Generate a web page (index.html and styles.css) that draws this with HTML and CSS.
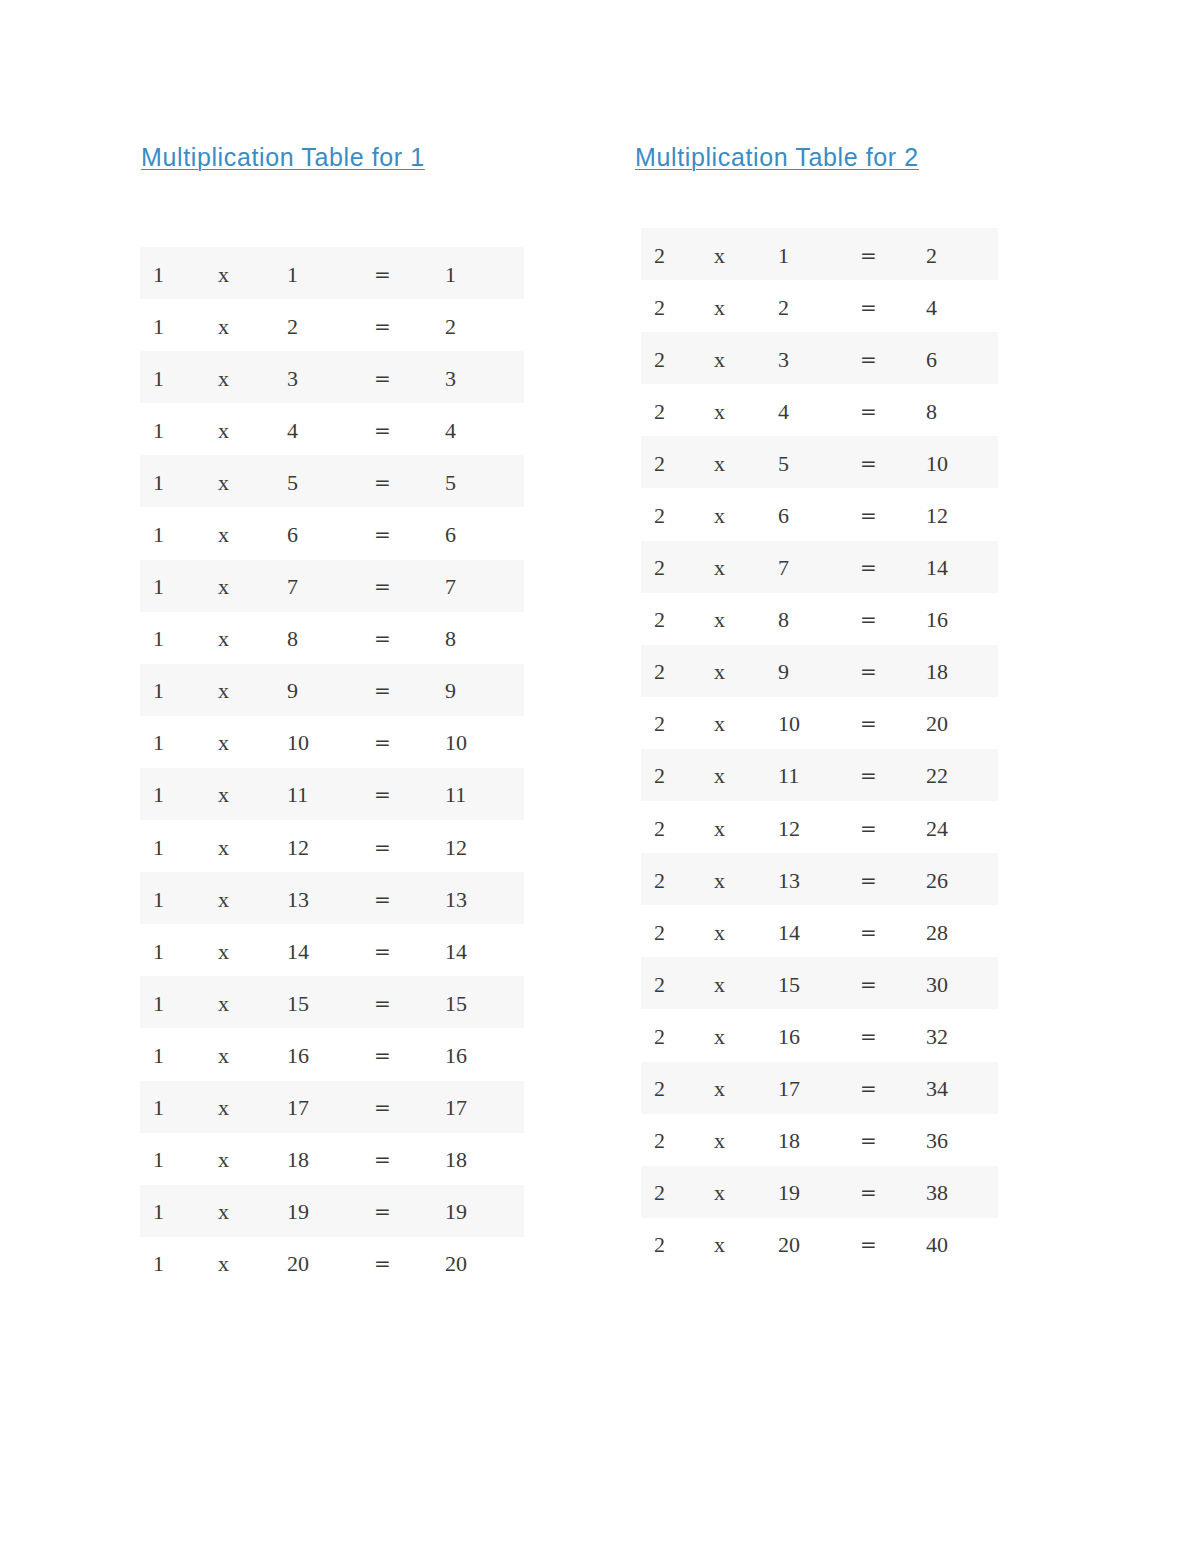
FILE: index.html
```html
<!DOCTYPE html>
<html>
<head>
<meta charset="utf-8">
<link rel="stylesheet" href="styles.css">
</head>
<body>
<div class="page">
  <section class="col col-one">
    <h2 class="title"><a href="#">Multiplication Table for 1</a></h2>
    <table class="mt mt-one">
      <tbody>
        <tr><td>1</td><td>x</td><td>1</td><td>=</td><td>1</td></tr>
        <tr><td>1</td><td>x</td><td>2</td><td>=</td><td>2</td></tr>
        <tr><td>1</td><td>x</td><td>3</td><td>=</td><td>3</td></tr>
        <tr><td>1</td><td>x</td><td>4</td><td>=</td><td>4</td></tr>
        <tr><td>1</td><td>x</td><td>5</td><td>=</td><td>5</td></tr>
        <tr><td>1</td><td>x</td><td>6</td><td>=</td><td>6</td></tr>
        <tr><td>1</td><td>x</td><td>7</td><td>=</td><td>7</td></tr>
        <tr><td>1</td><td>x</td><td>8</td><td>=</td><td>8</td></tr>
        <tr><td>1</td><td>x</td><td>9</td><td>=</td><td>9</td></tr>
        <tr><td>1</td><td>x</td><td>10</td><td>=</td><td>10</td></tr>
        <tr><td>1</td><td>x</td><td>11</td><td>=</td><td>11</td></tr>
        <tr><td>1</td><td>x</td><td>12</td><td>=</td><td>12</td></tr>
        <tr><td>1</td><td>x</td><td>13</td><td>=</td><td>13</td></tr>
        <tr><td>1</td><td>x</td><td>14</td><td>=</td><td>14</td></tr>
        <tr><td>1</td><td>x</td><td>15</td><td>=</td><td>15</td></tr>
        <tr><td>1</td><td>x</td><td>16</td><td>=</td><td>16</td></tr>
        <tr><td>1</td><td>x</td><td>17</td><td>=</td><td>17</td></tr>
        <tr><td>1</td><td>x</td><td>18</td><td>=</td><td>18</td></tr>
        <tr><td>1</td><td>x</td><td>19</td><td>=</td><td>19</td></tr>
        <tr><td>1</td><td>x</td><td>20</td><td>=</td><td>20</td></tr>
      </tbody>
    </table>
  </section>
  <section class="col col-two">
    <h2 class="title"><a href="#">Multiplication Table for 2</a></h2>
    <table class="mt mt-two">
      <tbody>
        <tr><td>2</td><td>x</td><td>1</td><td>=</td><td>2</td></tr>
        <tr><td>2</td><td>x</td><td>2</td><td>=</td><td>4</td></tr>
        <tr><td>2</td><td>x</td><td>3</td><td>=</td><td>6</td></tr>
        <tr><td>2</td><td>x</td><td>4</td><td>=</td><td>8</td></tr>
        <tr><td>2</td><td>x</td><td>5</td><td>=</td><td>10</td></tr>
        <tr><td>2</td><td>x</td><td>6</td><td>=</td><td>12</td></tr>
        <tr><td>2</td><td>x</td><td>7</td><td>=</td><td>14</td></tr>
        <tr><td>2</td><td>x</td><td>8</td><td>=</td><td>16</td></tr>
        <tr><td>2</td><td>x</td><td>9</td><td>=</td><td>18</td></tr>
        <tr><td>2</td><td>x</td><td>10</td><td>=</td><td>20</td></tr>
        <tr><td>2</td><td>x</td><td>11</td><td>=</td><td>22</td></tr>
        <tr><td>2</td><td>x</td><td>12</td><td>=</td><td>24</td></tr>
        <tr><td>2</td><td>x</td><td>13</td><td>=</td><td>26</td></tr>
        <tr><td>2</td><td>x</td><td>14</td><td>=</td><td>28</td></tr>
        <tr><td>2</td><td>x</td><td>15</td><td>=</td><td>30</td></tr>
        <tr><td>2</td><td>x</td><td>16</td><td>=</td><td>32</td></tr>
        <tr><td>2</td><td>x</td><td>17</td><td>=</td><td>34</td></tr>
        <tr><td>2</td><td>x</td><td>18</td><td>=</td><td>36</td></tr>
        <tr><td>2</td><td>x</td><td>19</td><td>=</td><td>38</td></tr>
        <tr><td>2</td><td>x</td><td>20</td><td>=</td><td>40</td></tr>
      </tbody>
    </table>
  </section>
</div>
</body>
</html>
```

FILE: styles.css
```css
html, body {
  margin: 0;
  padding: 0;
  background: #ffffff;
}

.page {
  display: flex;
  align-items: flex-start;
  padding: 140px 0 0 140px;
}

.col-one {
  width: 495px;
}

.col-two {
  width: 420px;
}

.title {
  margin: 0;
  font-family: "Liberation Sans", Arial, sans-serif;
  font-weight: normal;
  font-size: 25px;
  line-height: 34px;
  letter-spacing: 0.62px;
}

.col-one .title {
  padding-left: 1px;
}

.title a {
  color: #3a8cc4;
  text-decoration: underline;
  text-decoration-thickness: 1px;
  text-underline-offset: 3px;
}

.mt {
  border-collapse: collapse;
  font-family: "Liberation Serif", "Times New Roman", serif;
  font-size: 22px;
  color: #3a3a3a;
  table-layout: fixed;
}

.mt td {
  height: 52.1px;
  padding: 3px 0 0 13px;
  box-sizing: border-box;
  vertical-align: middle;
}

.mt td:nth-child(4) {
  font-family: "DejaVu Serif", serif;
  font-size: 20px;
}

.mt tr:nth-child(odd) td {
  background: #f7f7f7;
}

.mt-one {
  width: 384px;
  margin-top: 73px;
}

.mt-one td:nth-child(1) { width: 65px; }
.mt-one td:nth-child(2) { width: 69px; }
.mt-one td:nth-child(3) { width: 87px; }
.mt-one td:nth-child(4) { width: 71px; }
.mt-one td:nth-child(5) { width: 92px; }

.mt-two {
  width: 357px;
  margin-top: 54px;
  margin-left: 6px;
}

.mt-two td:nth-child(1) { width: 60px; }
.mt-two td:nth-child(2) { width: 64px; }
.mt-two td:nth-child(3) { width: 82px; }
.mt-two td:nth-child(4) { width: 66px; }
.mt-two td:nth-child(5) { width: 85px; }
```
